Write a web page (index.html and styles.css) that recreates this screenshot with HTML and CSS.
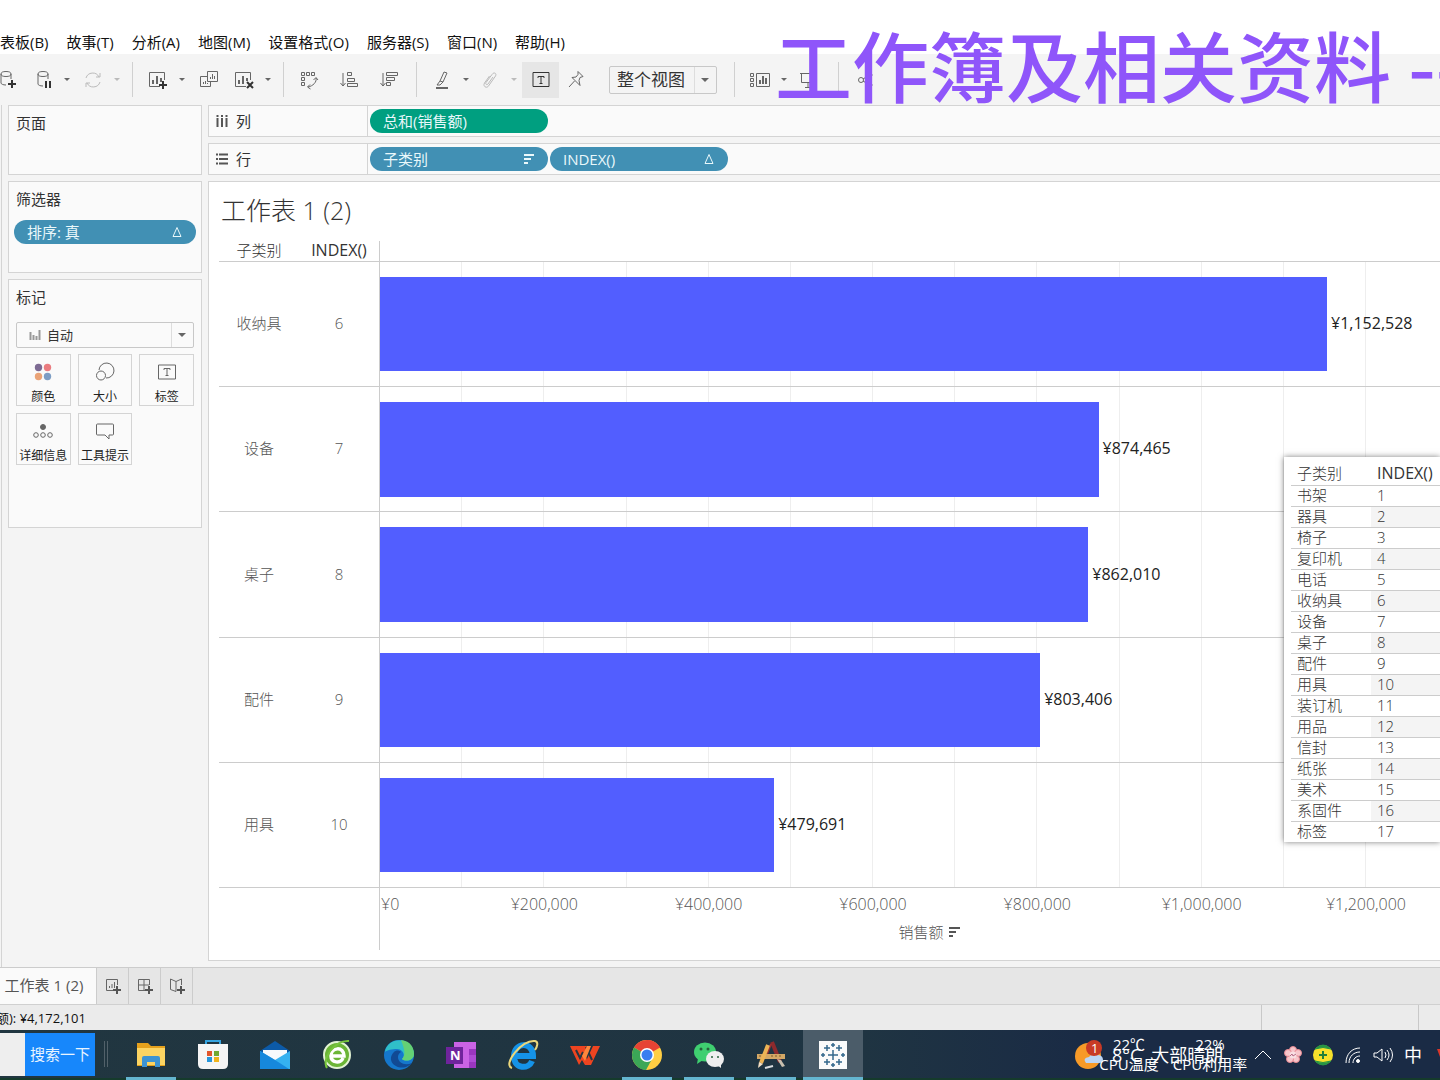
FILE: index.html
```html
<!DOCTYPE html>
<html lang="zh-CN">
<head>
    <meta charset="UTF-8">
    <meta name="viewport" content="width=device-width, initial-scale=1.0">
    <title>工作表 1 (2)</title>
    <link rel="stylesheet" href="styles.css">
</head>
<body>

    <nav class="menu">
        <button>表板(B)</button>
        <button>故事(T)</button>
        <button>分析(A)</button>
        <button>地图(M)</button>
        <button>设置格式(O)</button>
        <button>服务器(S)</button>
        <button>窗口(N)</button>
        <button>帮助(H)</button>
    </nav>

    <div class="toolbar">
        <div class="group group-data">
            <button class="tool" aria-label="新建数据源"><svg width="20" height="20" viewBox="0 0 20 20"><path d="M2 4v9c0 1 2 2 5 2M12 4v5"/><ellipse cx="7" cy="4" rx="5" ry="2.5"/><path class="heavy" d="M13 10v8M9 14h8"/></svg></button>
            <div class="split">
                <button class="tool" aria-label="暂停"><svg width="20" height="20" viewBox="0 0 20 20"><path d="M5 4v10c0 1 2 2 5 2M15 4v5"/><ellipse cx="10" cy="4" rx="5" ry="2.5"/><path class="heavy" d="M13 11v7M17 11v7"/></svg></button>
                <button class="caret" aria-label="更多"></button>
            </div>
            <div class="split faded">
                <button class="tool" aria-label="刷新"><svg width="20" height="20" viewBox="0 0 20 20"><path d="M3 8a7 7 0 0 1 13-1M17 12a7 7 0 0 1-13 1M17 3v4h-4M3 17v-4h4"/></svg></button>
                <button class="caret" aria-label="更多"></button>
            </div>
        </div>
        <span class="sep"></span>
        <div class="group group-sheet">
            <div class="split">
                <button class="tool" aria-label="新建工作表"><svg width="20" height="20" viewBox="0 0 20 20"><path d="M16.500 10V2.500h-15v14H12"/><path class="bars" d="M5 14v-4M9 14V6M13 12V8"/><path class="heavy" d="M15 11v8M11 15h8"/></svg></button>
                <button class="caret" aria-label="更多"></button>
            </div>
            <button class="tool" aria-label="复制"><svg width="20" height="20" viewBox="0 0 20 20"><path d="M8.500 1.500h10v10h-10zM8 6.500H1.500v10h10V12"/><path d="M11.500 9V7M13.500 9V4M15.500 9V6M4.500 14v-2M6.500 14v-3M8.500 14v-1"/></svg></button>
            <div class="split">
                <button class="tool" aria-label="清除工作表"><svg width="20" height="20" viewBox="0 0 20 20"><path d="M16.500 10V2.500h-15v14H12"/><path class="bars" d="M5 14v-4M9 14V6M13 11V8"/><path class="heavy" d="M13 12l6 6M19 12l-6 6"/></svg></button>
                <button class="caret" aria-label="更多"></button>
            </div>
        </div>
        <span class="sep"></span>
        <div class="group group-sort">
            <button class="tool" aria-label="交换行和列"><svg width="20" height="20" viewBox="0 0 20 20"><path d="M2.500 2.500h3v3h-3zM7.500 2.500h3v3h-3zM12.500 2.500h3v3h-3zM2.500 7.500h3v3h-3zM2.500 12.500h3v3h-3zM17 8c1 4-3 8-8 9M14.500 10L17 7.500l2 2.500M11 14.500L8.500 17l3 2"/></svg></button>
            <button class="tool" aria-label="升序排序"><svg width="20" height="20" viewBox="0 0 20 20"><path d="M4 3v13M1.500 13L4 16l2.500-3M8.500 2.500h4v3h-4zM8.500 8.500h7v3h-7zM8.500 13.500h10v3h-10z"/></svg></button>
            <button class="tool" aria-label="降序排序"><svg width="20" height="20" viewBox="0 0 20 20"><path d="M4 3v13M1.500 13L4 16l2.500-3M7.500 2.500h11v3h-11zM7.500 7.500h8v3h-8zM7.500 12.500h4v3h-4z"/></svg></button>
        </div>
        <span class="sep"></span>
        <div class="group">
            <div class="split">
                <button class="tool" aria-label="突出显示"><svg width="20" height="20" viewBox="0 0 20 20"><path d="M12 2l3 1-4 9-3-1zM8 11l-3 4h3l3-3"/><path class="bars" d="M4 18h12"/></svg></button>
                <button class="caret" aria-label="更多"></button>
            </div>
            <div class="split faded">
                <button class="tool" aria-label="分组"><svg width="20" height="20" viewBox="0 0 20 20"><path d="M13 7l-5 7c-1 1.500-3 0-2-1.500l6-8c2-3 5-1 3.500 1.500l-7 10c-2 3-6 0-4-3l5-7"/></svg></button>
                <button class="caret" aria-label="更多"></button>
            </div>
            <button class="tool pressed" aria-label="显示标记标签"><svg width="20" height="20" viewBox="0 0 20 20"><path class="dark" d="M2 2.500h16v14H2zM7 8V6.500h6V8M10 6.500v7M8.500 13.500h3"/></svg></button>
            <button class="tool" aria-label="固定轴"><svg width="20" height="20" viewBox="0 0 20 20"><path d="M13 1.500l5 5-3 1-1 3 1 5-8-8 4-.5 2-2.500zM9.500 11L4 17"/></svg></button>
        </div>
        <div class="dropdown fit">
            <select aria-label="视图">
                <option>整个视图</option>
            </select>
        </div>
        <span class="sep"></span>
        <div class="group group-show">
            <div class="split">
                <button class="tool" aria-label="显示卡"><svg width="22" height="20" viewBox="0 0 22 20"><path d="M7.500 3.500h13v13h-13zM1.500 3.500h3v3h-3zM1.500 8.500h3v3h-3zM1.500 13.500h3v3h-3z"/><path class="bars" d="M11 14v-4M14 14V6M17 14V8"/></svg></button>
                <button class="caret" aria-label="更多"></button>
            </div>
            <button class="tool" aria-label="演示模式"><svg width="20" height="20" viewBox="0 0 20 20"><path d="M2 3.500h16M3.500 4v8.500h13V4M10 13v4M7 17.500h6"/></svg></button>
        </div>
        <span class="sep"></span>
        <button class="tool share" aria-label="共享"><svg width="20" height="20" viewBox="0 0 20 20"><circle cx="5" cy="10" r="2.500"/><circle cx="14" cy="5" r="2"/><circle cx="14" cy="15" r="2"/><path d="M7 9l5-3M7 11l5 3"/></svg></button>
    </div>

    <div class="caption">工作簿及相关资料 --</div>

    <main>
        <aside>
            <section class="card pages">
                <h2>页面</h2>
            </section>
            <section class="card filters">
                <h2>筛选器</h2>
                <button class="pill blue">排序: 真 <svg width="12" height="12" viewBox="0 0 12 12"><path d="M6 1.500L10 10.500H2z"/></svg></button>
            </section>
            <section class="card marks">
                <h2>标记</h2>
                <div class="dropdown mark-type">
                    <svg width="12" height="12" viewBox="0 0 12 12"><path d="M1.500 3v8M4.500 6v5M7.500 7v4M10.500 1v10"/></svg>
                    <select aria-label="标记类型">
                        <option>自动</option>
                    </select>
                </div>
                <div class="mark-grid">
                    <button><svg width="22" height="22" viewBox="0 0 22 22"><circle cx="6.500" cy="6.500" r="3.700" fill="#7d6b93"/><circle cx="15.500" cy="6.500" r="3.700" fill="#ea7c80"/><circle cx="6.500" cy="15.500" r="3.700" fill="#eaa377"/><circle cx="15.500" cy="15.500" r="3.700" fill="#7d9dc4"/></svg>颜色</button>
                    <button><svg width="22" height="22" viewBox="0 0 22 22" class="line"><path d="M5 9a7.500 7.500 0 1 1 7 8"/><circle cx="7" cy="14.500" r="4.500"/></svg>大小</button>
                    <button><svg width="22" height="22" viewBox="0 0 22 22" class="line"><path d="M2.500 4h17v14h-17zM8 9V7.500h6V9M11 7.500v7M9.500 14.500h3"/></svg>标签</button>
                    <button><svg width="22" height="22" viewBox="0 0 22 22" class="line"><circle cx="11" cy="7" r="2.500" fill="#666"/><circle cx="4" cy="15" r="2.300"/><circle cx="11" cy="15" r="2.300"/><circle cx="18" cy="15" r="2.300"/></svg>详细信息</button>
                    <button><svg width="22" height="22" viewBox="0 0 22 22" class="line"><path d="M3.500 4h15q1 0 1 1v9q0 1-1 1H15v4l-4-4H3.500q-1 0-1-1V5q0-1 1-1z"/></svg>工具提示</button>
                </div>
            </section>
        </aside>

        <div class="view">
            <div class="shelf">
                <div class="shelf-name"><svg width="14" height="14" viewBox="0 0 14 14"><path d="M2.500 1v2M7 1v2M11.500 1v2M2.500 4v9M7 4v9M11.500 4v9"/></svg>列</div>
                <div class="pills">
                    <button class="pill green">总和(销售额)</button>
                </div>
            </div>
            <div class="shelf">
                <div class="shelf-name"><svg width="14" height="14" viewBox="0 0 14 14"><path d="M1 2.500h2M1 7h2M1 11.500h2M4 2.500h9M4 7h9M4 11.500h9"/></svg>行</div>
                <div class="pills">
                    <button class="pill blue">子类别 <svg width="12" height="12" viewBox="0 0 12 12"><path class="bars" d="M1 2h10M1 6h7M1 10h4"/></svg></button>
                    <button class="pill blue">INDEX() <svg width="12" height="12" viewBox="0 0 12 12"><path d="M6 1.500L10 10.500H2z"/></svg></button>
                </div>
            </div>

            <div class="sheet">
                <h1>工作表 1 (2)</h1>
                <div class="chart">
                    <div class="chart-head">
                        <span>子类别</span>
                        <span class="field">INDEX()</span>
                    </div>
                    <div class="rows">
                        <div class="row"><span>收纳具</span><span>6</span><div class="plot"><div class="bar" style="width: 89.34%"></div><b>¥1,152,528</b></div></div>
                        <div class="row"><span>设备</span><span>7</span><div class="plot"><div class="bar" style="width: 67.79%"></div><b>¥874,465</b></div></div>
                        <div class="row"><span>桌子</span><span>8</span><div class="plot"><div class="bar" style="width: 66.82%"></div><b>¥862,010</b></div></div>
                        <div class="row"><span>配件</span><span>9</span><div class="plot"><div class="bar" style="width: 62.28%"></div><b>¥803,406</b></div></div>
                        <div class="row"><span>用具</span><span>10</span><div class="plot"><div class="bar" style="width: 37.19%"></div><b>¥479,691</b></div></div>
                    </div>
                    <div class="axis">
                        <div class="ticks">
                            <span>¥0</span>
                            <span>¥200,000</span>
                            <span>¥400,000</span>
                            <span>¥600,000</span>
                            <span>¥800,000</span>
                            <span>¥1,000,000</span>
                            <span>¥1,200,000</span>
                        </div>
                        <div class="axis-title">销售额 <svg width="12" height="12" viewBox="0 0 12 12"><path d="M1 2h11M1 6h7M1 10h4"/></svg></div>
                    </div>
                </div>

                <div class="index-list">
                    <table>
                        <thead>
                            <tr><th>子类别</th><th class="field">INDEX()</th></tr>
                        </thead>
                        <tbody>
                            <tr><td>书架</td><td>1</td></tr>
                            <tr><td>器具</td><td>2</td></tr>
                            <tr><td>椅子</td><td>3</td></tr>
                            <tr><td>复印机</td><td>4</td></tr>
                            <tr><td>电话</td><td>5</td></tr>
                            <tr><td>收纳具</td><td>6</td></tr>
                            <tr><td>设备</td><td>7</td></tr>
                            <tr><td>桌子</td><td>8</td></tr>
                            <tr><td>配件</td><td>9</td></tr>
                            <tr><td>用具</td><td>10</td></tr>
                            <tr><td>装订机</td><td>11</td></tr>
                            <tr><td>用品</td><td>12</td></tr>
                            <tr><td>信封</td><td>13</td></tr>
                            <tr><td>纸张</td><td>14</td></tr>
                            <tr><td>美术</td><td>15</td></tr>
                            <tr><td>系固件</td><td>16</td></tr>
                            <tr><td>标签</td><td>17</td></tr>
                        </tbody>
                    </table>
                </div>
            </div>
        </div>
    </main>

    <div class="tabs">
        <button class="tab">工作表 1 (2)</button>
        <button class="new" aria-label="新建工作表"><svg width="16" height="16" viewBox="0 0 16 16"><path d="M12.500 7V1.500h-11v11H8M4.500 10V8M7 10V6M9.500 10V4"/><path class="heavy" d="M12 8v8M8 12h8"/></svg></button>
        <button class="new" aria-label="新建仪表板"><svg width="16" height="16" viewBox="0 0 16 16"><path d="M12.500 7V1.500h-11v11H8M7 2v10M2 7h10"/><path class="heavy" d="M12 8v8M8 12h8"/></svg></button>
        <button class="new" aria-label="新建故事"><svg width="16" height="16" viewBox="0 0 16 16"><path d="M12.500 7V1L7 3.500 1.500 1v10.500L7 13.500v-10"/><path class="heavy" d="M12 8v8M8 12h8"/></svg></button>
    </div>

    <div class="status">
        <span class="sum">额): ¥4,172,101</span>
        <span class="cell"></span>
        <span class="cell last"></span>
    </div>

    <footer class="taskbar">
        <form class="search">
            <input type="text" aria-label="搜索">
            <button type="button">搜索一下</button>
        </form>
        <span class="grip"></span>
        <div class="apps">
            <button class="open" aria-label="文件资源管理器"><svg width="32" height="32" viewBox="0 0 32 32"><path d="M2 4h11l3 3h14v20H2z" fill="#e5a11c"/><path d="M2 9h28v17H2z" fill="#fcd462"/><path d="M7 28v-9q0-2 2-2h14q2 0 2 2v9h-5v-5h-8v5z" fill="#3d93d2"/></svg></button>
            <button aria-label="应用商店"><svg width="32" height="32" viewBox="0 0 32 32"><path d="M9 7V2h14v5" fill="none" stroke="#37a4e0" stroke-width="2"/><path d="M1 5h30v20q0 5-5 5H6q-5 0-5-5z" fill="#f5f5f5"/><path d="M10 12h5v5h-5z" fill="#e2562b"/><path d="M17 12h5v5h-5z" fill="#71a930"/><path d="M10 18h5v5h-5z" fill="#2796db"/><path d="M17 18h5v5h-5z" fill="#f0b41b"/></svg></button>
            <button aria-label="邮件"><svg width="32" height="32" viewBox="0 0 32 32"><path d="M1 12L16 2l15 10v8H1z" fill="#0c5aa7"/><path d="M4 11h24v8L16 25 4 17z" fill="#f6f9fc"/><path d="M1 12l15 9 15-9v18H1z" fill="#35b1f0"/><path d="M1 12l15 9 14 9H1z" fill="#1688dc"/></svg></button>
            <button aria-label="浏览器"><svg width="32" height="32" viewBox="0 0 32 32"><circle cx="16" cy="16" r="13" fill="#6bb536" stroke="#e3f3d4" stroke-width="2"/><path d="M9 17h14c0-10-13-9-13 0 0 7 10 8 12 2" fill="none" stroke="#fff" stroke-width="3.500"/><path d="M6 29C0 20 14 1 28 2" fill="none" stroke="#77c43c" stroke-width="2"/></svg></button>
            <button aria-label="Edge"><svg width="32" height="32" viewBox="0 0 32 32"><circle cx="16" cy="16" r="15" fill="#1577cc"/><path d="M2 13C4-3 30-3 31 15c0 7-9 8-12 5 4-3 1-10-5-10-5 0-10 1-12 3z" fill="#30bfc8"/><path d="M18 1c10 1 13 8 13 14 0 7-9 8-12 5 5-5 1-13-1-19z" fill="#64d174"/><path d="M11 13c-8 8 1 18 12 15 3-1 5-3 6-4-7 3-14 0-14-6 0-2 1-4 3-5-2-2-5-2-7 0z" fill="#114a94"/></svg></button>
            <button aria-label="OneNote"><svg width="32" height="32" viewBox="0 0 32 32"><path d="M9 3h22v26H9z" fill="#ca63e5"/><path d="M24 10h7v19h-7z" fill="#9a36c0"/><path d="M24 16h7v7h-7z" fill="#ae4bd5"/><path d="M1 8h17v17H1z" fill="#6f249c"/><text x="5" y="21" class="letter">N</text></svg></button>
            <button aria-label="Internet Explorer"><svg width="32" height="32" viewBox="0 0 32 32"><path d="M8 17h18c0-15-19-14-19 0 0 14 15 13 18 5" fill="none" stroke="#1593e8" stroke-width="6"/><path d="M5 29C-5 26 15 0 28 2c4 1 2 6 0 9" fill="none" stroke="#ead77c" stroke-width="2"/></svg></button>
            <button aria-label="WPS"><svg width="32" height="32" viewBox="0 0 32 32"><path d="M1 7h18l-4 7 3 6 6-13h7l-9 19h-6l-3-5-3 5z" fill="#ee4420"/><path d="M7 11l4 8 3-6M17 8l6 13" fill="none" stroke="#263641" stroke-width="2"/><path d="M18 7h4l-6 15-3-5z" fill="#ff863b"/></svg></button>
            <button class="open" aria-label="Chrome"><svg width="32" height="32" viewBox="0 0 32 32"><circle cx="16" cy="16" r="15" fill="#ffce43"/><path d="M16 16L3 8.500a15 15 0 0 1 26 0z" fill="#e64334"/><path d="M3 8.500A15 15 0 0 0 15 31l6-11-5-4z" fill="#3ba757"/><path d="M16 9h13q-5-8-13-8z" fill="#e64334"/><circle cx="16" cy="16" r="7" fill="#fff"/><circle cx="16" cy="16" r="5.500" fill="#3a7df0"/></svg></button>
            <button class="open" aria-label="微信"><svg width="32" height="32" viewBox="0 0 32 32"><ellipse cx="12" cy="13" rx="11" ry="9.500" fill="#3fcf70"/><path d="M5 19l-1 6 6-4z" fill="#3fcf70"/><ellipse cx="22" cy="20" rx="9" ry="8" fill="#eee"/><path d="M24 26l4 3v-5z" fill="#eee"/><g fill="#27623c"><circle cx="8" cy="10" r="1.500"/><circle cx="15" cy="10" r="1.500"/><circle cx="19" cy="18" r="1"/><circle cx="25" cy="18" r="1"/></g></svg></button>
            <button class="open" aria-label="绘图工具"><svg width="32" height="32" viewBox="0 0 32 32"><path d="M17 3l8 20" stroke="#8e2a2d" stroke-width="4"/><path d="M16 5l-4 10" stroke="#9c3030" stroke-width="2"/><path d="M2 15h28v5H2z" fill="#d3a765"/><path d="M5 16v2M9 16v2M17 16v2M21 16v2M25 16v2" stroke="#7d5a2c"/><path d="M13 6L6 24" stroke="#edb455" stroke-width="4"/><path d="M3 29l1-6 4 2z" fill="#f4dfc4"/><path d="M10 29l8-2" stroke="#d9dde0" stroke-width="2"/><path d="M22 20l4 1 4 6-3 1z" fill="#c9bfae"/></svg></button>
            <button class="open active" aria-label="Tableau"><svg width="32" height="32" viewBox="0 0 32 32"><path d="M2 2h28v28H2z" fill="#fafafa"/><path d="M16 11v10M11 16h10M10 6v6M7 9h6M22 6v6M19 9h6M10 20v6M7 23h6M22 20v6M19 23h6M16 4v4M14 6h4M16 24v4M14 26h4M6 14v4M4 16h4M26 14v4M24 16h4" stroke="#35688c" stroke-width="1.500"/></svg></button>
        </div>
        <div class="weather">
            <svg width="32" height="32" viewBox="0 0 32 32"><circle cx="15" cy="18" r="13" fill="#f79a28"/><path d="M13 25q-4-5 3-6 3-5 8-2 6 0 6 5 0 3-4 3z" fill="#bcd5f5"/><circle cx="21" cy="10" r="8" fill="#c83a26"/><text x="18" y="15" class="count">1</text></svg>
            <span class="today"><span>8°C</span><span>大部晴朗</span></span>
            <div class="monitor">
                <span>22℃</span><span>22%</span>
                <span>CPU温度</span><span>CPU利用率</span>
            </div>
        </div>
        <div class="tray">
            <button aria-label="显示隐藏的图标"><svg width="20" height="20" viewBox="0 0 20 20"><path d="M2 14l8-8 8 8"/></svg></button>
            <button aria-label="花"><svg width="20" height="20" viewBox="0 0 20 20"><g fill="#f7c6cb" stroke="#e98992"><circle cx="10" cy="5" r="3.500"/><circle cx="15" cy="8" r="3.500"/><circle cx="13" cy="14" r="3.500"/><circle cx="7" cy="14" r="3.500"/><circle cx="5" cy="8" r="3.500"/></g><circle cx="10" cy="10" r="3.500" fill="#f9dfe2" stroke="none"/><path d="M7 11l2-2 1 2 3-2" stroke="#b66c87"/></svg></button>
            <button aria-label="安全卫士"><svg width="22" height="22" viewBox="0 0 22 22"><circle cx="11" cy="11" r="10" fill="#f7e12b" stroke="none"/><path d="M3 5q8-8 16 0-8-3-16 0zM19 17q-8 8-16 0 8 3 16 0z" fill="#259445" stroke="#259445"/><path d="M11 7v8M7 11h8" stroke="#21803a" stroke-width="2"/></svg></button>
            <button aria-label="网络"><svg width="20" height="20" viewBox="0 0 20 20"><path d="M3 18C3 9 9 3 17 3M6 18C6 11 11 7 17 7M10 18c0-4 3-7 7-7"/><circle cx="15" cy="16" r="1.500" fill="#fff"/></svg></button>
            <button aria-label="音量"><svg width="20" height="20" viewBox="0 0 20 20"><path d="M1 8h3l5-4v12l-5-4H1zM12 7q2 3 0 6M14 5q4 5 0 10M17 3q5 7 0 14"/></svg></button>
            <button>中</button>
            <button class="edge" aria-label="输入法"><svg width="12" height="20" viewBox="0 0 12 20"><path d="M9 4h8v8h-5z" fill="#d9362a" stroke="none"/></svg></button>
        </div>
    </footer>

</body>
</html>
```
FILE: styles.css
```css
* {
    box-sizing: border-box;
}
body {
    margin: 0;
    min-height: 100vh;
    display: flex;
    flex-direction: column;
    position: relative;
    overflow-x: hidden;
    background-color: #f4f4f4;
    color: #333;
    font-family: "Open Sans", "Noto Sans CJK SC", sans-serif;
    font-size: 15px;
    line-height: 20px;
}
button,
input,
select {
    margin: 0;
    padding: 0;
    border: 0;
    border-radius: 0;
    background: none;
    color: inherit;
    font: inherit;
}
h1,
h2 {
    margin: 0;
    font-weight: normal;
}
svg {
    display: block;
    flex: none;
    fill: none;
}

/* menu and toolbar */
.menu {
    display: flex;
    gap: 18px;
    height: 54px;
    padding-top: 32px;
    background-color: #fff;
    color: #111;
}
.menu button {
    height: 20px;
    white-space: nowrap;
}
.toolbar {
    display: flex;
    align-items: center;
    height: 51px;
}
.group,
.split {
    display: flex;
    align-items: center;
}
.group-data {
    gap: 2px;
    margin-left: -7px;
}
.group-sheet {
    gap: 3px;
}
.group-sort {
    gap: 8px;
    padding-right: 4px;
}
.group-show {
    padding-right: 7px;
}
.tool {
    display: flex;
    align-items: center;
    justify-content: center;
    width: 32px;
    height: 36px;
}
.tool svg,
.tabs svg {
    stroke: #666;
}
.tool .bars {
    stroke-width: 2;
}
.tool .heavy {
    stroke: #333;
    stroke-width: 2;
}
.tool .dark {
    stroke: #333;
}
.pressed {
    width: 37px;
    background-color: #e6e6e6;
}
.share {
    margin-left: 2px;
}
.faded {
    opacity: 0.4;
}
.caret {
    display: flex;
    justify-content: center;
    width: 16px;
}
.caret::before,
.dropdown::after {
    content: "";
    border: 3px solid transparent;
    border-top-color: #666;
    border-bottom: 0;
}
.sep {
    width: 1px;
    height: 35px;
    margin: 0 9px 0 7px;
    background-color: #d0d0d0;
}
.dropdown {
    position: relative;
    display: flex;
    align-items: center;
    border: 1px solid #c8c8c8;
    border-radius: 2px;
}
.dropdown::after {
    position: absolute;
    right: 7px;
    border-width: 4px;
    border-bottom: 0;
}
.dropdown select {
    appearance: none;
    flex: 1;
    height: 100%;
    border-right: 21px solid transparent;
    background: linear-gradient(#ddd, #ddd) right / 1px 100% no-repeat;
}
.fit {
    width: 108px;
    height: 28px;
    margin: 0 10px 0 18px;
}
.fit select {
    padding-left: 7px;
    font-size: 17px;
}
.caption {
    position: absolute;
    top: 18px;
    left: 775px;
    right: 0;
    overflow: hidden;
    color: #8f55fa;
    font-family: "Noto Sans CJK SC", sans-serif;
    font-size: 77px;
    font-weight: 500;
    line-height: 92px;
    white-space: nowrap;
}

/* cards and shelves */
main {
    flex: 1;
    display: flex;
    gap: 6px;
    margin-left: 1px;
    padding: 0 0 6px 6px;
    border-left: 1px solid #d4d4d4;
}
aside {
    flex: none;
    display: flex;
    flex-direction: column;
    gap: 6px;
    width: 194px;
}
.card {
    padding: 7px;
    border: 1px solid #d4d4d4;
    background-color: #fafafa;
}
.card h2 {
    font-size: 15px;
    line-height: 20px;
}
.pages {
    height: 70px;
}
.filters {
    height: 92px;
    padding: 7px 5px;
}
.filters h2 {
    padding-left: 2px;
}
.marks {
    height: 249px;
}
.pill {
    display: flex;
    align-items: center;
    justify-content: space-between;
    width: 178px;
    height: 24px;
    padding: 0 13px;
    border-radius: 12px;
    color: #e9f8fb;
    white-space: nowrap;
}
.filters .pill {
    width: 100%;
    margin-top: 11px;
}
.pill svg {
    stroke: #e9f8fb;
}
.pill .bars {
    stroke-width: 2;
}
.blue {
    background-color: #4190b4;
}
.green {
    background-color: #009f80;
}
.mark-type {
    height: 26px;
    margin-top: 15px;
    font-size: 13px;
}
.mark-type svg {
    margin: 0 6px 0 12px;
    stroke: #999;
    stroke-width: 2;
}
.mark-grid {
    display: grid;
    grid-template-columns: 1fr 1fr 1fr;
    gap: 7px;
    margin-top: 6px;
}
.mark-grid button {
    display: flex;
    flex-direction: column;
    align-items: center;
    height: 52px;
    padding-top: 6px;
    border: 1px solid #d4d4d4;
    color: #222;
    font-size: 12px;
    line-height: 28px;
    white-space: nowrap;
}
.line {
    stroke: #666;
}
.view {
    flex: 1;
    min-width: 0;
    display: flex;
    flex-direction: column;
    gap: 6px;
}
.shelf {
    display: flex;
    height: 32px;
    border: 1px solid #d4d4d4;
    border-right: 0;
    background-color: #fafafa;
}
.shelf-name {
    display: flex;
    align-items: center;
    gap: 7px;
    width: 159px;
    padding-left: 6px;
    border-right: 1px solid #d4d4d4;
}
.shelf-name svg {
    stroke: #555;
    stroke-width: 2;
}
.pills {
    display: flex;
    align-items: center;
    gap: 2px;
    padding-left: 2px;
}

/* worksheet */
.sheet {
    position: relative;
    flex: 1;
    display: flex;
    flex-direction: column;
    padding: 12px 0 10px 10px;
    border: 1px solid #d4d4d4;
    border-right: 0;
    background-color: #fff;
    font-weight: 300;
}
.sheet h1 {
    padding-left: 2px;
    font-size: 25px;
    font-weight: 300;
    line-height: 32px;
}
.chart {
    flex: 1;
    display: flex;
    flex-direction: column;
    margin-top: 15px;
    background: linear-gradient(#ccc, #ccc) 160px 0 / 1px 100% no-repeat;
}
.chart-head,
.row {
    display: grid;
    grid-template-columns: 80px 80px 1fr;
    align-items: center;
    text-align: center;
    border-bottom: 1px solid #ccc;
}
.chart-head {
    height: 21px;
    line-height: 18px;
}
.chart-head span,
.row span,
.plot b {
    padding-bottom: 2px;
}
.field {
    font-size: 16px;
    font-weight: 500;
}
.rows {
    flex: 1;
    display: flex;
    flex-direction: column;
}
.row {
    flex: 1;
    color: #555;
}
.plot {
    align-self: stretch;
    display: flex;
    align-items: center;
    margin-left: 1px;
    /* one guide per 100,000 on a scale of 1,290,000 */
    background: repeating-linear-gradient(to right, transparent 0, transparent calc(100% / 12.9 - 1px), #eee calc(100% / 12.9 - 1px), #eee calc(100% / 12.9));
}
.bar {
    flex: none;
    height: 76%;
    background-color: #525eff;
}
.plot b {
    padding-left: 4px;
    color: #222;
    font-size: 16px;
    font-weight: normal;
}
.axis {
    height: 62px;
    margin-left: 161px;
    padding-top: 6px;
    overflow: hidden;
    color: #555;
}
.ticks {
    display: flex;
    font-size: 16px;
}
.ticks span {
    flex: none;
    width: calc(200% / 12.9);
    text-align: center;
}
.ticks span:first-child {
    width: calc(100% / 12.9);
    padding-left: 1px;
    text-align: left;
}
.axis-title {
    display: flex;
    align-items: center;
    justify-content: center;
    gap: 4px;
    margin: 8px 0 0 38px;
}
.axis-title svg {
    stroke: #555;
    stroke-width: 2;
}
.index-list {
    position: absolute;
    top: 275px;
    right: 0;
    width: 156px;
    padding: 7px 0 0 7px;
    background-color: #fff;
    box-shadow: 0 0 6px rgba(0, 0, 0, 0.5);
}
.index-list table {
    width: 100%;
    border-collapse: collapse;
    table-layout: fixed;
    line-height: 18px;
}
.index-list th,
.index-list td {
    height: 21px;
    padding: 0 0 2px 6px;
    text-align: left;
    border-bottom: 1px solid #ccc;
}
.index-list th {
    font-weight: 300;
}
.index-list th:first-child {
    width: 80px;
}
.index-list .field {
    font-weight: 500;
}
.index-list tr:last-child td {
    border-bottom: 0;
}
.index-list tr:nth-child(even) td:last-child {
    background-color: #f4f4f4;
}

/* sheet tabs and status */
.tabs {
    display: flex;
    height: 37px;
    border-top: 1px solid #ccc;
    background-color: #e6e6e6;
}
.tab,
.new {
    display: flex;
    align-items: center;
    justify-content: center;
    width: 32px;
    border-right: 1px solid #ccc;
}
.tab {
    width: 97px;
    padding: 0 8px 2px 0;
    background-color: #fafafa;
    color: #555;
    white-space: nowrap;
}
.tabs .heavy {
    stroke: #555;
    stroke-width: 2;
}
.status {
    display: flex;
    height: 26px;
    border-top: 1px solid #d0d0d0;
    background-color: #ebebeb;
    color: #111;
    font-size: 13px;
    line-height: 26px;
}
.sum {
    flex: 1;
    margin-left: -4px;
}
.cell {
    width: 157px;
    border-left: 1px solid #c8c8c8;
}
.last {
    width: 22px;
}

/* taskbar */
.taskbar {
    display: flex;
    align-items: center;
    height: 50px;
    border-bottom: 2px solid #153b2c;
    background: linear-gradient(to right, #213640, #1f3442 60%, #1a2b45 75%);
    color: #fff;
}
.search {
    display: flex;
    height: 43px;
}
.search input {
    width: 25px;
    background-color: #eee;
}
.search button {
    width: 70px;
    background-color: #1787fb;
    color: #e8f4ff;
}
.grip {
    width: 4px;
    height: 26px;
    margin: 0 18px 0 9px;
    border: 1px solid #52616a;
    border-width: 0 1px;
}
.apps {
    display: flex;
    gap: 12px;
    height: 100%;
}
.apps button {
    display: flex;
    align-items: center;
    justify-content: center;
    width: 50px;
    height: 50px;
}
.apps .open {
    border-bottom: 3px solid #64b5cf;
    padding-top: 3px;
}
.apps .active {
    width: 60px;
    margin-left: -5px;
    background-color: #4b5c69;
}
.letter {
    fill: #fff;
    font-size: 13px;
    font-weight: bold;
}
.weather {
    position: relative;
    display: flex;
    align-items: center;
    gap: 7px;
    width: 175px;
    margin-left: auto;
    white-space: nowrap;
}
.count {
    fill: #fff;
    font-size: 13px;
}
.today {
    display: flex;
    gap: 10px;
    padding-top: 2px;
    font-size: 18px;
}
.monitor {
    position: absolute;
    left: 26px;
    top: -4px;
    display: grid;
    grid-template-columns: 60px 76px;
    column-gap: 13px;
    justify-items: center;
}
.tray {
    display: flex;
    padding-top: 2px;
}
.tray button {
    display: flex;
    align-items: center;
    justify-content: center;
    width: 30px;
    height: 40px;
    font-size: 18px;
}
.tray .edge {
    width: 12px;
}
.tray svg {
    stroke: #fff;
}
```
